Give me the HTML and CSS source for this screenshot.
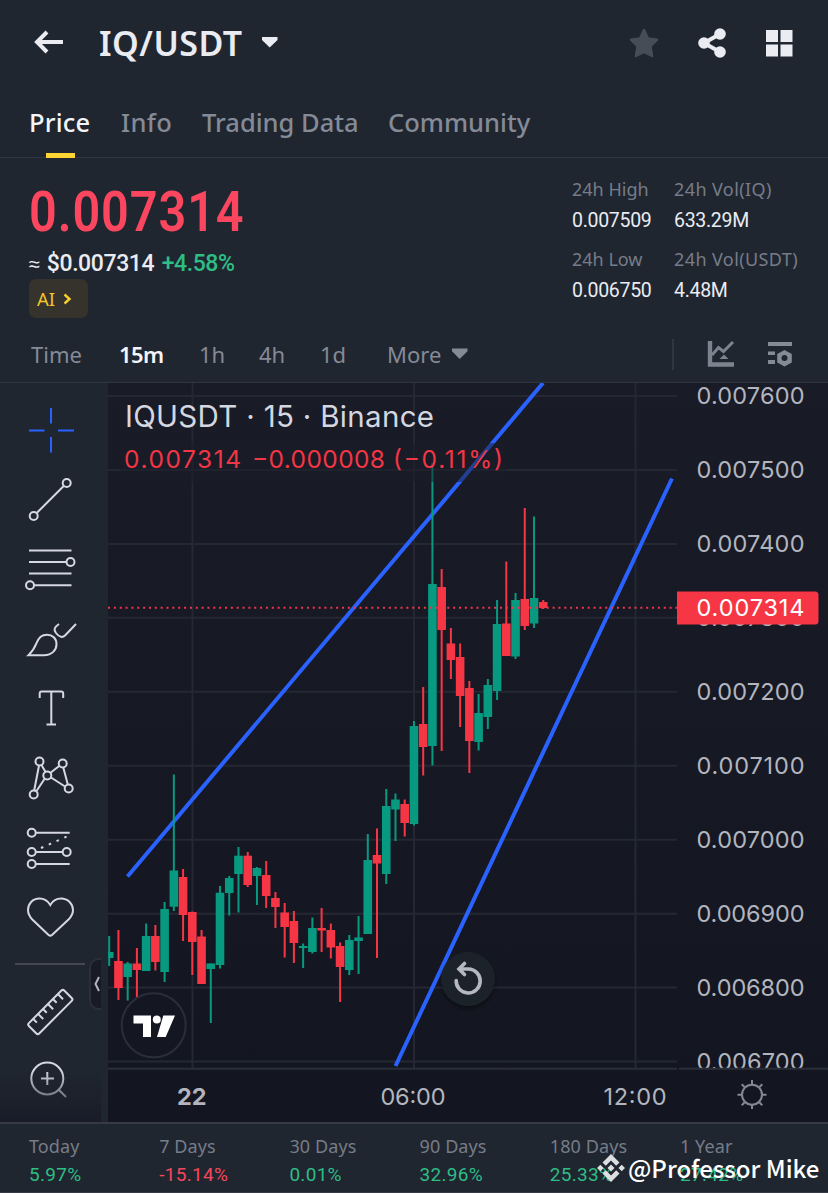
FILE: index.html
```html
<!DOCTYPE html>
<html lang="en">
<head>
    <meta charset="UTF-8">
    <title>IQ/USDT</title>
    <link rel="stylesheet" href="styles.css">
</head>
<body>
    <header class="header">
        <svg class="back" width="32" height="26" viewBox="0 0 32 26"><path d="M30 13H4M14 3L4 13l10 10" fill="none" stroke="#eaecf2" stroke-width="4"/></svg>
        <h1 class="pair">IQ/USDT</h1>
        <svg class="caret" width="16" height="12" viewBox="0 0 16 12"><path d="M0 1h15.500v3L7.700 11.500 0 4z" fill="#eaecf2"/></svg>
        <div class="actions">
            <svg width="30" height="32" viewBox="0 0 30 32"><path d="M15 3l4 8.500 9 1.200-6.500 6.500L23 29l-8-4-8 4 1.500-9.800L2 12.700l9-1.200z" fill="#474d57" stroke="#474d57" stroke-width="2.500" stroke-linejoin="round"/></svg>
            <svg width="30" height="32" viewBox="0 0 30 32"><path d="M23 7L7 16l16 9" fill="none" stroke="#eaecf2" stroke-width="4"/><circle cx="23" cy="7" r="5.800" fill="#eaecf2"/><circle cx="7" cy="16" r="5.800" fill="#eaecf2"/><circle cx="23" cy="25" r="5.800" fill="#eaecf2"/></svg>
            <svg width="28" height="32" viewBox="0 0 28 32"><path d="M1 3h12v12H1zM15.500 3h12v12h-12zM1 17.500h12v12H1zM15.500 17.500h12v12h-12z" fill="#eaecf2"/></svg>
        </div>
    </header>

    <nav class="tabs">
        <span class="tab tab-price active">Price</span>
        <span class="tab tab-info">Info</span>
        <span class="tab tab-data">Trading Data</span>
        <span class="tab tab-community">Community</span>
    </nav>

    <section class="summary">
        <div class="quote">
            <div class="price">0.007314</div>
            <div class="fiat">≈ <span class="num">$0.007314</span> <span class="num change">+4.58%</span></div>
            <div class="ai">AI <svg width="9" height="12" viewBox="0 0 9 12"><path d="M1.500 1.500L6.500 6l-5 4.500" fill="none" stroke="#f8cf2c" stroke-width="2.400"/></svg></div>
        </div>
        <dl class="stats">
            <div><dt>24h High</dt><dd>0.007509</dd></div>
            <div><dt class="vol">24h Vol(IQ)</dt><dd>633.29M</dd></div>
            <div><dt>24h Low</dt><dd>0.006750</dd></div>
            <div><dt class="vol">24h Vol(USDT)</dt><dd>4.48M</dd></div>
        </dl>
    </section>

    <nav class="intervals">
        <span class="time">Time</span>
        <span class="selected">15m</span>
        <span class="h1">1h</span>
        <span class="h4">4h</span>
        <span class="d1">1d</span>
        <span class="more">More</span>
        <svg width="16" height="12" viewBox="0 0 16 12"><path d="M0 .500h15.500v2.800L7.700 11 0 3.300z" fill="#858a97"/></svg>
        <div class="chart-tools">
            <svg width="28" height="28" viewBox="0 0 28 28"><path d="M3 1v23.500h24" fill="none" stroke="#7d828f" stroke-width="4.400"/><path d="M5 15l6.500-7.500 5 4L26 2" fill="none" stroke="#7d828f" stroke-width="3"/><path d="M17 14.500l4.500 4.500h-9z" fill="#7d828f"/></svg>
            <svg width="26" height="28" viewBox="0 0 26 28"><path d="M1 2h24v4H1zM1 11.500h7v3.500H1zM1 20h7v4H1z" fill="#858a97"/><path d="M17.500 10l7.300 4v8.500l-7.300 4-7.300-4V14z" fill="#858a97"/><circle cx="17.500" cy="18" r="3" fill="#1f2630"/></svg>
        </div>
    </nav>

    <main class="workspace">
        <aside class="toolbar">
            <svg class="tool" viewBox="0 0 56 56"><path class="cross" d="M28 6v15.500M28 35v15.500M6 28.500h15.500M35 28.500h16"/></svg>
            <svg class="tool" viewBox="0 0 56 56"><path d="M13.700 41l27-27"/><circle cx="43.700" cy="11" r="4"/><circle cx="10.700" cy="44" r="4"/></svg>
            <svg class="tool" viewBox="0 0 56 56"><path d="M6 9.500h42.500M6 21h37.500M6 32.500h42.500M11 44.300h37.500"/><circle cx="47.500" cy="21" r="4"/><circle cx="7" cy="44.300" r="4"/></svg>
            <svg class="tool" viewBox="0 0 56 56"><path d="M5.500 44.200h15.500C29 44.200 33.500 39 33.500 33.200S29.500 23.700 24 23.700c-5.500 0-8 2.500-10.500 8.500C11.500 37.200 9 41 5.500 44.200zM36 13C31 16.500 30.500 18.500 33 22c3.500 4.500 6.500 5 9.500 2l10.500-11"/></svg>
            <svg class="tool" viewBox="0 0 56 56"><path d="M16.700 18v-4.500q0-2 2-2h19.500q2 0 2 2V18M28.300 11.500v33M23.500 44.500H33"/></svg>
            <svg class="tool" viewBox="0 0 56 56"><path d="M16 15.500l-4.800 25M18.500 15l4 7M36.500 15.800l-9 7M40.300 17.500l4.500 17M21.500 29l-8 12M28 27.500L42 36.500"/><circle cx="16.500" cy="11.500" r="4"/><circle cx="39.700" cy="13.500" r="4"/><circle cx="24.300" cy="25.500" r="4"/><circle cx="10.700" cy="44.500" r="4"/><circle cx="45.700" cy="38.500" r="4"/></svg>
            <svg class="tool" viewBox="0 0 56 56"><path d="M13 13.700h33.700M13 33h26.500M13 45h33.700"/><path d="M18 29l27-12" stroke-dasharray="2.500 6"/><circle cx="8.700" cy="13.700" r="4"/><circle cx="8.700" cy="33" r="4"/><circle cx="43.700" cy="33" r="4"/><circle cx="8.700" cy="45" r="4"/></svg>
            <svg class="tool" viewBox="0 0 56 56"><path d="M27.300 16C24.500 11.500 21 9.600 16.500 9.600 9.500 9.600 5 15 5 21c0 4 1.500 6.500 4.300 9.500l16.300 15.400q1.700 1.500 3.400 0L45.500 30.500C48.500 27.500 50 25 50 21c0-6-5-11.400-12-11.400-4.500 0-8 1.900-10.700 6.400z"/></svg>
            <div class="separator"></div>
            <svg class="tool" viewBox="0 0 56 56"><g transform="rotate(-45 27.300 28)"><rect x="2.300" y="20.700" width="50" height="14.600" rx="2"/><path d="M10.300 21v5M17.300 21v7M24.300 21v5M31.300 21v7M38.300 21v5M45.300 21v7"/></g></svg>
            <svg class="tool zoom" viewBox="0 0 56 56"><circle cx="24.300" cy="26.500" r="16"/><path d="M18 26.500h13M24.300 20v13M36 38l7 7"/></svg>
            <div class="collapse"><svg width="10" height="20" viewBox="0 0 10 20"><path d="M8 3L4.500 10 8 17" fill="none" stroke="#b2b5be" stroke-width="2"/></svg></div>
        </aside>

        <svg class="chart" width="720" height="739" viewBox="108 383 720 739">
            <defs>
                <linearGradient id="pane" x1="0" y1="0" x2="0" y2="1">
                    <stop offset="0" stop-color="#191b27"/>
                    <stop offset="1" stop-color="#131620"/>
                </linearGradient>
                <clipPath id="scaleClip"><rect x="677" y="383" width="151" height="685"/></clipPath>
                <filter id="shadow" x="-30%" y="-30%" width="160%" height="160%"><feDropShadow dx="0" dy="3" stdDeviation="2" flood-opacity=".4"/></filter>
            </defs>
            <rect x="108" y="383" width="720" height="739" fill="url(#pane)"/>
            <g id="grid"></g>
            <g id="candles"></g>
            <path class="trend" d="M127.500 876.500L543 383M395.500 1066L672 478.500"/>
            <g id="spikes"></g>
            <path class="last" d="M108 607.800H677"/>

            <rect x="119" y="443" width="387" height="39" fill="#191b27" fill-opacity=".5"/>
            <text class="symbol" x="125" y="427" textLength="309">IQUSDT · 15 · Binance</text>
            <text class="ohlc" x="124" y="468" textLength="117">0.007314</text>
            <text class="ohlc" x="252" y="468" textLength="133">−0.000008</text>
            <text class="ohlc" x="393" y="468" textLength="110">(−0.11%)</text>

            <g id="scale" clip-path="url(#scaleClip)"></g>
            <path d="M677 591.500h138q3.500 0 3.500 3.500v26q0 3.500-3.500 3.500H677z" fill="#f73645"/>
            <text class="axis current" x="696.500" y="616" textLength="108">0.007314</text>

            <path d="M108 1068.800h569M679 1068.800h149" stroke="#2a2e38" stroke-width="2"/>
            <text class="axis day" x="177" y="1105" textLength="29.500">22</text>
            <text class="axis" x="380.500" y="1105" textLength="65">06:00</text>
            <text class="axis" x="603.500" y="1105" textLength="63">12:00</text>
            <g fill="none" stroke="#858894" stroke-width="2"><circle cx="752" cy="1094.700" r="10"/><path d="M752 1084v-4M752 1105v4M741.500 1094.700h-4M762.500 1094.700h4M744.500 1087l-2.800-2.800M759.500 1087l2.800-2.800M744.500 1102.500l-2.800 2.800M759.500 1102.500l2.800 2.800"/></g>

            <circle cx="153.700" cy="1025.300" r="32" fill="#141722" stroke="#2b2d38" stroke-width="2"/>
            <path d="M133.500 1015.500H151v21.500h-8v-13.500h-9.500zM163.300 1015.500H175l-9.300 21.500H157z" fill="#fff"/>
            <circle cx="156.800" cy="1019.500" r="4" fill="#fff"/>

            <circle cx="468" cy="979" r="27" fill="#1d212b" filter="url(#shadow)"/>
            <path d="M464.500 963.500l-5.500 5.500 5.500 5.500M460 969h8.500a12 12 0 1 1-12.300 11.500" fill="none" stroke="#b5b7c1" stroke-width="3.600" stroke-linecap="round"/>
        </svg>
    </main>

    <footer class="performance">
        <div class="period"><span>Today</span><b>5.97%</b></div>
        <div class="period"><span>7 Days</span><b class="down">-15.14%</b></div>
        <div class="period"><span>30 Days</span><b>0.01%</b></div>
        <div class="period"><span>90 Days</span><b>32.96%</b></div>
        <div class="period"><span>180 Days</span><b>25.33%</b></div>
        <div class="period"><span>1 Year</span><b>27.42%</b></div>
    </footer>

    <div class="watermark">
        <svg width="28" height="28" viewBox="0 0 28 28"><path d="M14 0l8.500 8.500-3.300 3.300L14 6.600l-5.200 5.200-3.300-3.300zM3.300 10.700L6.600 14l-3.300 3.300L0 14zM24.700 10.700L28 14l-3.300 3.300-3.300-3.300zM14 10.500l3.500 3.500-3.500 3.500-3.500-3.500zM8.800 16.200L14 21.400l5.200-5.200 3.300 3.300L14 28l-8.500-8.500z" fill="#dcdee0"/></svg>
        <span>@Professor Mike</span>
    </div>
    <script src="script.js"></script>
</body>
</html>
```

FILE: styles.css
```css
* {
    box-sizing: border-box;
}
body {
    margin: 0;
    width: 828px;
    height: 1193px;
    display: flex;
    flex-direction: column;
    position: relative;
    overflow: hidden;
    background: #1f2630;
    color: #eaecf2;
    font-family: "Noto Sans", sans-serif;
}
svg {
    display: block;
    flex: none;
}

/* header */
.header {
    height: 85px;
    display: flex;
    align-items: center;
    padding: 0 35px 0 33px;
}
.back {
    margin-top: -1px;
}
.pair {
    margin: 1px 19px 0 34px;
    width: 144px;
    font-size: 34px;
    font-weight: 600;
    letter-spacing: 0.5px;
    white-space: nowrap;
}
.caret {
    margin-top: -2px;
}
.actions {
    display: flex;
    gap: 38px;
    margin-left: auto;
}

/* tabs */
.tabs {
    height: 73px;
    display: flex;
    gap: 30px;
    padding-left: 29px;
    border-bottom: 1px solid #30363f;
    font-size: 25.500px;
    font-weight: 500;
    line-height: 74px;
    color: #858a97;
    white-space: nowrap;
}
.tab-price {
    width: 62px;
    letter-spacing: 0.2px;
}
.tab-info {
    width: 51px;
    letter-spacing: 0.4px;
}
.tab-data {
    width: 156px;
}
.active {
    display: flex;
    flex-direction: column;
    height: 73px;
    color: #f4f5f9;
}
.active::after {
    content: "";
    width: 29px;
    height: 5px;
    margin: -6px 0 0 17px;
    background: #fcd535;
    flex: none;
}

/* price block */
.summary {
    height: 170px;
    display: flex;
    justify-content: space-between;
    padding: 17px 28px 0 29px;
}
.price {
    width: 240px;
    height: 72px;
    line-height: 75px;
    font-family: Roboto, sans-serif;
    font-size: 55px;
    font-weight: 600;
    letter-spacing: 1px;
    color: #fa475f;
    transform: scaleX(0.885);
    transform-origin: 0 0;
}
.fiat {
    height: 32px;
    line-height: 34px;
    font-size: 20px;
    font-weight: 500;
    letter-spacing: 0.3px;
    white-space: pre;
}
.num {
    font-family: Roboto, sans-serif;
    font-size: 23px;
    letter-spacing: -0.4px;
    margin-left: 1px;
}
.change {
    margin-left: 2px;
    color: #2ebd85;
}
.ai {
    width: 59px;
    height: 39px;
    display: flex;
    align-items: center;
    gap: 8px;
    padding-left: 8px;
    border-radius: 7px;
    background: #36322c;
    color: #f0c42e;
    font-size: 18.500px;
}
.stats {
    display: grid;
    grid-template-columns: 102px 126px;
    grid-auto-rows: 70px;
    margin: -1px 0 0;
}
.stats dt {
    height: 31px;
    line-height: 31px;
    font-size: 18px;
    color: #777c88;
    white-space: nowrap;
}
.stats .vol {
    letter-spacing: 0.4px;
}
.stats dd {
    margin: 0;
    height: 31px;
    line-height: 31px;
    font-family: Roboto, sans-serif;
    font-size: 19.500px;
    letter-spacing: -0.3px;
}

/* intervals */
.intervals {
    height: 55px;
    display: flex;
    align-items: center;
    padding: 0 35px 2px 31px;
    border-bottom: 1px solid #30363f;
    font-size: 22px;
    color: #858a97;
}
.time {
    width: 88px;
}
.selected {
    width: 80px;
    font-weight: 600;
    letter-spacing: -0.6px;
    color: #f4f5f9;
}
.h1 {
    width: 60px;
}
.h4 {
    width: 61px;
}
.d1 {
    width: 67px;
}
.more {
    width: 65px;
}
.chart-tools {
    display: flex;
    gap: 32px;
    height: 31px;
    margin-left: auto;
    padding: 1px 0 0 33px;
    border-left: 2px solid #30363f;
}

/* drawing tools and chart */
.workspace {
    height: 739px;
    display: flex;
}
.toolbar {
    width: 108px;
    position: relative;
    display: flex;
    flex-direction: column;
    gap: 13.500px;
    padding: 19px 0 0 23px;
}
.tool {
    width: 56px;
    height: 56px;
    fill: none;
    stroke: #d5d8e2;
    stroke-width: 2;
}
.cross {
    stroke: #2962ff;
}
.separator {
    height: 2px;
    width: 70px;
    margin: 5px 0 5px -8px;
    background: #434852;
    flex: none;
}
.zoom {
    margin-top: -1.500px;
}
.toolbar::after {
    content: "";
    position: absolute;
    left: 0;
    bottom: 0;
    width: 101px;
    height: 52px;
    background: linear-gradient(rgba(24, 27, 38, 0), #191c28);
}
.collapse {
    position: absolute;
    left: 89px;
    top: 575px;
    width: 12px;
    height: 52px;
    display: flex;
    align-items: center;
    border: 2px solid #2b2f3a;
    border-right: none;
    border-radius: 10px 0 0 10px;
    background: #181b26;
}
.grid-line {
    stroke: #252833;
    stroke-width: 2;
}
.trend {
    fill: none;
    stroke: #2962ff;
    stroke-width: 4;
}
.last {
    stroke: #f23645;
    stroke-width: 2;
    stroke-dasharray: 2 3.850;
}
.up {
    fill: #089981;
}
.fall {
    fill: #f73645;
}
.symbol {
    font: 29.500px Inter, sans-serif;
    fill: #d5d7e0;
}
.ohlc {
    font: 24.500px Inter, sans-serif;
    fill: #f23645;
}
.axis {
    font: 23.500px Inter, sans-serif;
    fill: #b2b5be;
}
.current {
    fill: #fff;
}
.day {
    font-weight: 700;
}

/* performance strip */
.performance {
    flex: 1;
    display: grid;
    grid-template-columns: repeat(6, 130.200px);
    padding: 9px 0 0 29px;
    border-top: 2px solid #353a45;
    border-bottom: 1px solid #353a45;
}
.period {
    display: flex;
    flex-direction: column;
    font-size: 18px;
    line-height: 27px;
    letter-spacing: 0.1px;
    color: #777c88;
    white-space: nowrap;
}
.period b {
    padding-top: 1px;
    font-family: Roboto, sans-serif;
    font-size: 19px;
    font-weight: 400;
    letter-spacing: 0.3px;
    color: #2ebd85;
}
.period .down {
    color: #f6465d;
}
.watermark {
    position: absolute;
    left: 597px;
    top: 1150px;
    display: flex;
    align-items: center;
    gap: 3px;
    font-family: "Noto Sans CJK SC", sans-serif;
    font-size: 24px;
    font-weight: 500;
    line-height: 36px;
    color: #fff;
    white-space: nowrap;
}
```

FILE: script.js
```js
const SVG = "http://www.w3.org/2000/svg";
const FIRST_X = 109.2;
const STEP = 9.235;

// [direction, high, low, body top, body bottom]
const candles = [
    [1, 936, 966, 952, 958], [0, 930, 1000, 961, 988], [1, 962, 1000.5, 963.5, 977],
    [0, 948, 997, 963.5, 970], [1, 923.5, 971, 936, 971], [0, 925, 970.5, 936, 962],
    [1, 902, 982, 909, 972], [1, 774.5, 911, 870.5, 906.7], [0, 869, 941, 877, 915],
    [0, 911.5, 975, 912, 942], [0, 930, 984, 936.5, 984], [1, 963.5, 1023, 963.5, 969],
    [1, 886, 968.5, 892.7, 965], [1, 876, 915.5, 878, 893], [1, 847, 912.5, 855.7, 874],
    [0, 852, 887, 855.7, 885], [1, 867, 905, 868, 876], [0, 861, 908, 875, 896],
    [0, 892, 928, 898, 907], [0, 903, 957.5, 912.5, 927], [0, 911, 963, 921, 943],
    [1, 943.5, 968, 946, 948], [1, 917.5, 953.5, 928, 952], [0, 908, 952, 928, 930.5],
    [0, 923.5, 958.5, 930, 947.5], [0, 942.5, 1002, 946, 967], [1, 935, 975, 940, 970],
    [1, 916, 974, 937.5, 941], [1, 834, 934, 860, 934], [0, 828.5, 958, 855, 863.5],
    [1, 789, 884, 806, 874], [1, 793.5, 841, 799.5, 809.5], [0, 799.5, 836.5, 804, 823],
    [1, 721, 825.5, 726, 824], [0, 687, 775.5, 724, 747], [1, 463, 765.5, 584, 746],
    [0, 569, 751, 587, 630], [0, 628, 679, 643.5, 660], [0, 643.5, 727, 657, 696],
    [0, 681, 773, 688, 741], [1, 694, 750.5, 713, 742], [1, 679, 729, 685, 717],
    [1, 600, 700, 624, 691], [0, 561.5, 656, 623.5, 656], [1, 593, 659, 600, 656.5],
    [0, 508, 630, 599, 626], [1, 516.5, 628, 598, 623.5], [0, 600, 609, 602, 608]
];

function add(parent, tag, attrs, text) {
    const node = document.createElementNS(SVG, tag);
    for (const key in attrs) node.setAttribute(key, attrs[key]);
    if (text) node.textContent = text;
    document.getElementById(parent).appendChild(node);
}

for (let i = 0; i < 10; i++) {
    const y = 396 + i * 73.95;
    add("grid", "path", { class: "grid-line", d: `M108 ${y}H677` });
    add("scale", "text", { class: "axis", x: 696.5, y: y + 8.3, textLength: 108 }, ((76 - i) / 10000).toFixed(6));
}
[192.5, 414, 635.5].forEach(x => add("grid", "path", { class: "grid-line", d: `M${x} 383V1068` }));

candles.forEach(([up, high, low, top, bottom], i) => {
    const x = FIRST_X + i * STEP;
    const left = Math.max(x - 4.3, 108);
    const cls = up ? "up" : "fall";
    // the two long wicks pass over the trend line
    const layer = i === 7 || i === 35 ? "spikes" : "candles";
    add(layer, "rect", { class: cls, x: x - 1, y: high, width: 2, height: low - high });
    add(layer, "rect", { class: cls, x: left, y: top, width: x + 4.3 - left, height: bottom - top });
});
```
